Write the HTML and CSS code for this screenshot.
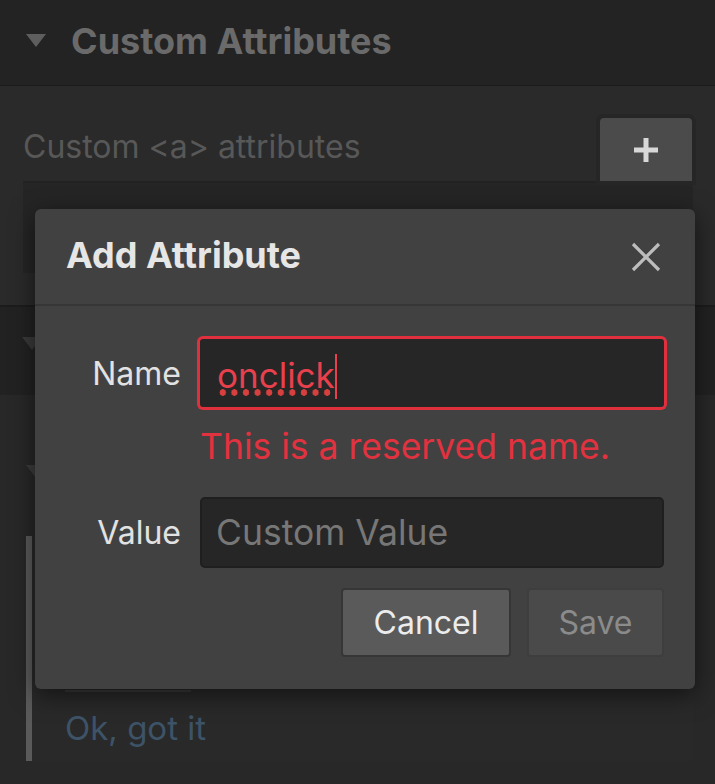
FILE: index.html
```html
<!DOCTYPE html>
<html lang="en">
  <head>
    <meta charset="UTF-8" />
    <meta name="viewport" content="width=device-width, initial-scale=1.0" />
    <title>Add Attribute</title>
    <link rel="stylesheet" href="styles.css">
  </head>
  <body>
    <div class="panel">
      <div class="sec-head">
        <span class="caret"></span>
        <h2>Custom Attributes</h2>
      </div>
      <div class="sec-body">
        <div class="attr-row">
          <span class="attr-label">Custom &lt;a&gt; attributes</span>
          <button class="add-btn" type="button">
            <svg width="26" height="26" viewBox="0 0 26 26">
              <path d="M13 1v24M1 13h24" stroke="#d8d8d8" stroke-width="5" fill="none" />
            </svg>
          </button>
        </div>
        <div class="attr-list"></div>
      </div>
      <div class="sec-head dim">
        <span class="caret side"></span>
      </div>
      <div class="sec-body lower">
        <span class="caret side small"></span>
        <div class="tip">
          <div class="tip-line"></div>
          <a class="tip-link" href="#">Ok, got it</a>
        </div>
      </div>
    </div>

    <div class="modal">
      <div class="modal-head">
        <h3>Add Attribute</h3>
        <button class="close-btn" type="button">
          <svg width="30" height="30" viewBox="0 0 30 30">
            <path d="M2 2l26 26M28 2L2 28" stroke="#bdbdbd" stroke-width="3.2" fill="none" />
          </svg>
        </button>
      </div>
      <div class="modal-body">
        <div class="form-row">
          <label class="form-label">Name</label>
          <div class="field error" role="textbox"><span class="typed">onclick</span><span class="cursor"></span></div>
        </div>
        <div class="form-row">
          <span class="form-label"></span>
          <div class="error-msg">This is a reserved name.</div>
        </div>
        <div class="form-row value-row">
          <label class="form-label" for="value">Value</label>
          <input class="field" id="value" type="text" placeholder="Custom Value" />
        </div>
        <div class="actions">
          <button class="btn cancel" type="button">Cancel</button>
          <button class="btn save" type="button">Save</button>
        </div>
      </div>
    </div>
  </body>
</html>
```

FILE: styles.css
```css
* {
  box-sizing: border-box;
}
html,
body {
  margin: 0;
  padding: 0;
  background-color: #232323;
  font-family: Inter, "Noto Sans", sans-serif;
}
.panel {
  width: 715px;
  height: 784px;
  overflow: hidden;
}
.sec-head {
  height: 86px;
  display: flex;
  align-items: center;
  padding-left: 26px;
  background: #232323;
  border-bottom: 1px solid #1b1b1b;
}
.sec-head h2 {
  margin: 0 0 0 25px;
  font-size: 36px;
  font-weight: 700;
  color: #6a6a6a;
  padding-bottom: 4px;
}
.caret {
  width: 0;
  height: 0;
  border-left: 10px solid transparent;
  border-right: 10px solid transparent;
  border-top: 13px solid #5e5e5e;
  margin-bottom: 4px;
}
.sec-head.dim {
  height: 90px;
  background: #222;
  border-bottom: none;
  border-top: 2px solid #1c1c1c;
  padding-left: 22px;
  align-items: flex-start;
  padding-top: 30px;
}
.caret.side {
  border-top-color: #3a3a3a;
}
.sec-body {
  background: #2a2a2a;
  padding: 32px 22px 32px 23px;
}
.attr-row {
  display: flex;
  justify-content: space-between;
  align-items: flex-end;
}
.attr-label {
  font-size: 32px;
  color: #585858;
  padding-bottom: 15px;
}
.add-btn {
  width: 92px;
  height: 63px;
  background: #4b4b4b;
  border: none;
  border-radius: 4px 4px 0 0;
  box-shadow: 0 0 0 4px #262626;
  display: flex;
  align-items: center;
  justify-content: center;
  padding: 0;
  margin-right: 1px;
}
.attr-list {
  height: 92px;
  background: #252525;
  border-top: 2px solid #222;
}
.sec-body.lower {
  height: 400px;
  padding: 70px 22px 0 26px;
  background: #282828;
}
.caret.small {
  display: block;
  border-top-color: #3c3c3c;
  margin-bottom: 58px;
}
.tip {
  height: 225px;
  background: #292929;
  border-left: 6px solid #5a5a5a;
  padding: 154px 0 0 33px;
}
.tip-line {
  width: 126px;
  height: 2px;
  background: #3a3a3a;
}
.tip-link {
  display: block;
  margin-top: 16px;
  font-size: 33px;
  color: #3d5368;
  text-decoration: none;
}

/* modal */
.modal {
  position: absolute;
  left: 35px;
  top: 209px;
  width: 660px;
  height: 480px;
  background: #414141;
  border-radius: 6px;
  box-shadow: 0 6px 24px rgba(0, 0, 0, 0.55);
}
.modal-head {
  height: 97px;
  display: flex;
  justify-content: space-between;
  align-items: center;
  padding: 0 34px 0 31px;
  border-bottom: 2px solid #363636;
}
.modal-head h3 {
  margin: 0;
  font-size: 36px;
  font-weight: 700;
  color: #e6e6e6;
  padding-bottom: 4px;
}
.close-btn {
  background: none;
  border: none;
  padding: 0;
  width: 30px;
  height: 30px;
  display: flex;
}
.modal-body {
  padding: 31px 31px 0 0;
}
.form-row {
  display: flex;
  align-items: center;
}
.form-label {
  width: 146px;
  flex: none;
  text-align: right;
  font-size: 32px;
  color: #e2e2e2;
  margin-right: 19px;
}
.field {
  flex: 1;
  min-width: 0;
  width: 0;
  height: 71px;
  background: #262626;
  border: 2px solid #1f1f1f;
  border-radius: 5px;
  padding: 0 14px;
  font-family: inherit;
  font-size: 35.5px;
  color: #e2e2e2;
  outline: none;
}
.field::placeholder {
  color: #777;
}
.field.error {
  height: 72px;
  margin-left: -2px;
  margin-right: -2px;
  border-color: #e0303e;
  box-shadow: 0 0 0 1px #e0303e;
  display: flex;
  align-items: center;
  padding-left: 17px;
  color: #e8404d;
}
.typed {
  font-size: 35px;
  line-height: 1;
  padding-top: 8px;
  padding-bottom: 3px;
  background-image: radial-gradient(circle, #d8403f 3px, transparent 3.5px);
  background-size: 11.6px 7px;
  background-repeat: repeat-x;
  background-position: 0 bottom;
}
.cursor {
  width: 2px;
  height: 45px;
  background: #e8404d;
  margin-top: 6px;
}
.error-msg {
  margin-top: 17px;
  font-size: 35.5px;
  line-height: 42px;
  color: #e2323f;
}
.value-row {
  margin-top: 29px;
}
.actions {
  display: flex;
  justify-content: flex-end;
  gap: 16px;
  margin-top: 20px;
}
.btn {
  height: 69px;
  border-radius: 4px;
  font-family: inherit;
  font-size: 32px;
  padding: 0;
}
.cancel {
  width: 170px;
  background: #5a5a5a;
  border: 2px solid #363636;
  color: #ececec;
}
.save {
  width: 137px;
  background: #4a4a4a;
  border: 2px solid #3e3e3e;
  color: #8b8b8b;
}
```
